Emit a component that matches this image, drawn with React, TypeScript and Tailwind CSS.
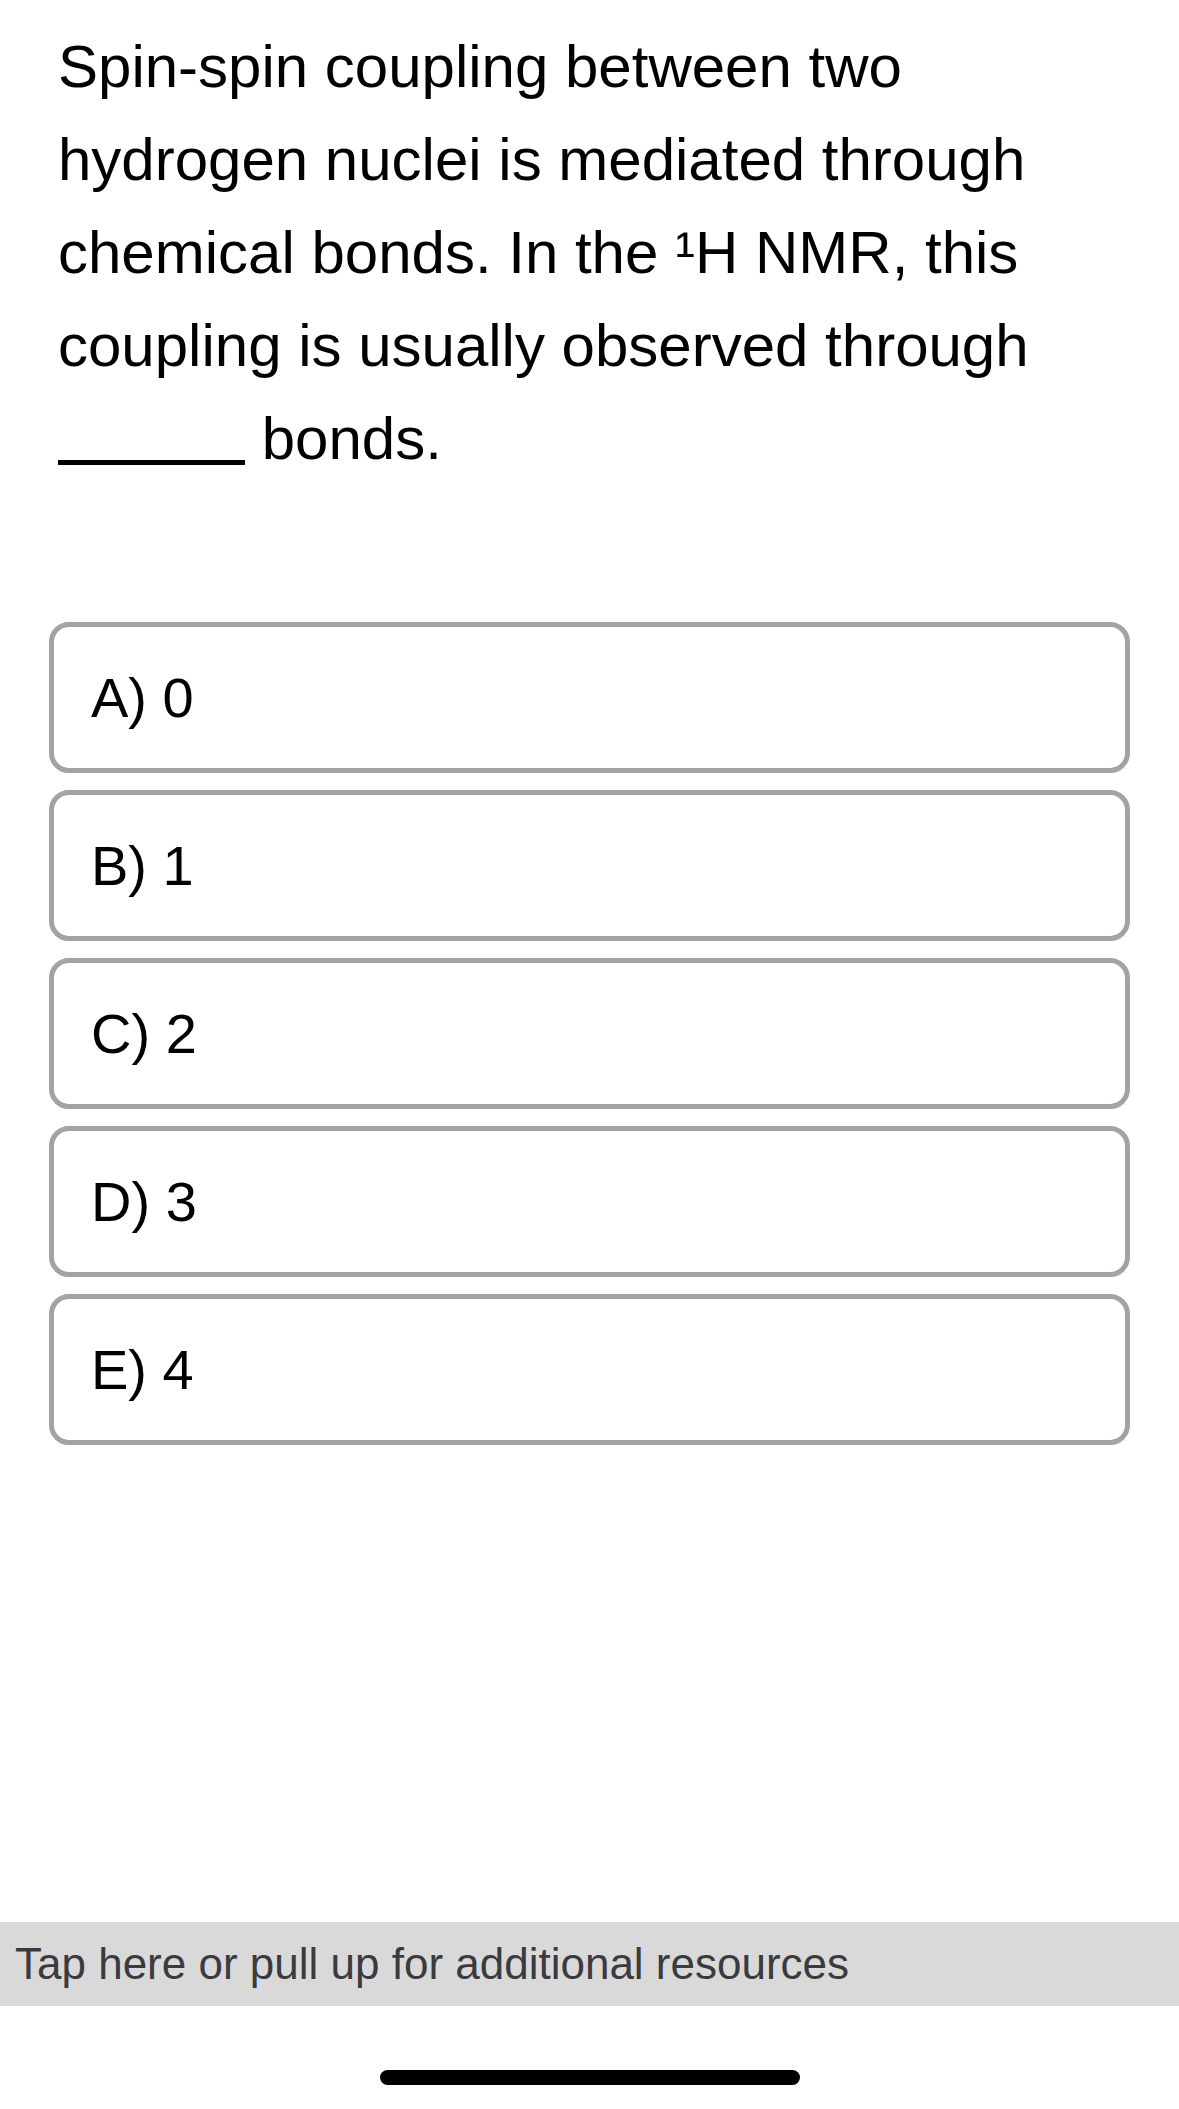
import React from "react";

const options = ["A) 0", "B) 1", "C) 2", "D) 3", "E) 4"];

export default function App() {
  return (
    <div
      className="flex h-[2109px] w-full flex-col bg-white text-black"
      style={{ fontFamily: '"Liberation Sans", Arial, sans-serif' }}
    >
      <div className="flex-1">
        <p className="pl-[58px] pr-[40px] pt-[20px] text-[60px] leading-[93px]">
          Spin-spin coupling between two
          <br />
          hydrogen nuclei is mediated through
          <br />
          chemical bonds. In the ¹H NMR, this
          <br />
          coupling is usually observed through
          <br />
          <span className="inline-block w-[187px] border-b-[5px] border-black align-[-6px]" />{" "}
          bonds.
        </p>

        <div className="mt-[137px] flex flex-col gap-[17px] px-[49px]">
          {options.map((o) => (
            <div
              key={o}
              className="flex h-[151px] items-center rounded-[20px] border-[5px] border-[#a2a3a7] pl-[37px] text-[56px]"
            >
              {o}
            </div>
          ))}
        </div>
      </div>

      <div className="flex h-[84px] items-center bg-[#d9d9d9] pl-[15px] text-[44px] text-[#3a3a3f]">
        Tap here or pull up for additional resources
      </div>
      <div className="flex h-[103px] justify-center pt-[64px]">
        <div className="h-[15px] w-[420px] rounded-full bg-black" />
      </div>
    </div>
  );
}
